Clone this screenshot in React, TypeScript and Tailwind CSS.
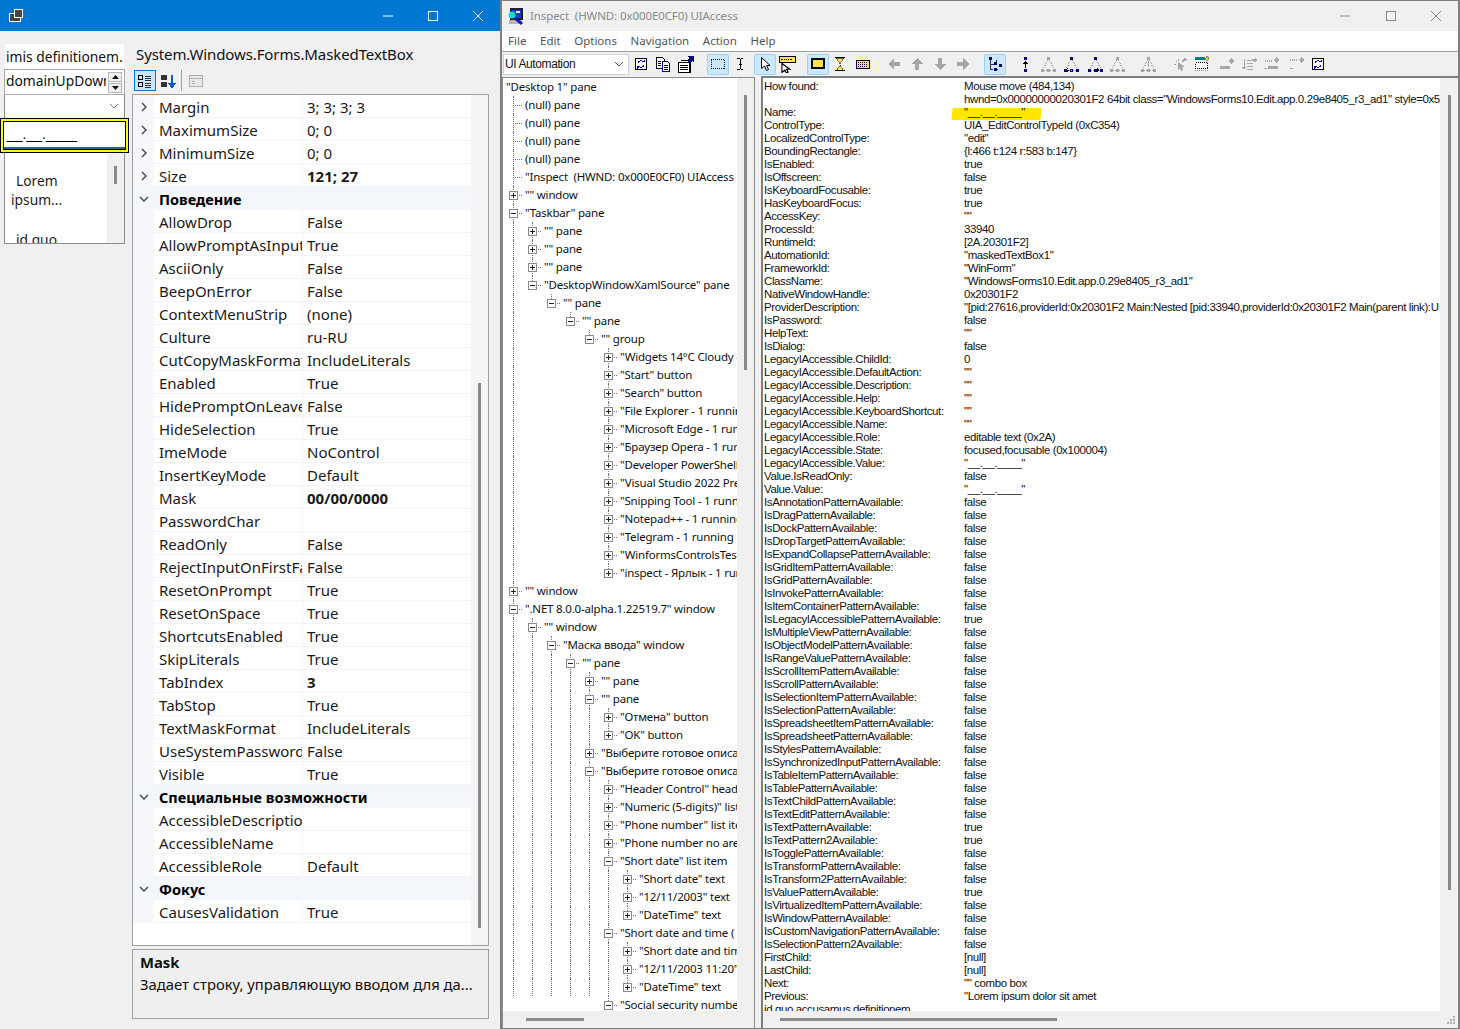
import type { ReactNode } from 'react';

const SEGOE = { fontFamily: '"Noto Sans", sans-serif' };
const ARIAL = { fontFamily: '"Liberation Sans", sans-serif' };

type PropRow = { name: string; value?: string; bold?: boolean; arrow?: boolean; section?: boolean };

const PROPS: PropRow[] = [
  { name: 'Margin', value: '3; 3; 3; 3', arrow: true },
  { name: 'MaximumSize', value: '0; 0', arrow: true },
  { name: 'MinimumSize', value: '0; 0', arrow: true },
  { name: 'Size', value: '121; 27', arrow: true, bold: true },
  { name: 'Поведение', section: true },
  { name: 'AllowDrop', value: 'False' },
  { name: 'AllowPromptAsInput', value: 'True' },
  { name: 'AsciiOnly', value: 'False' },
  { name: 'BeepOnError', value: 'False' },
  { name: 'ContextMenuStrip', value: '(none)' },
  { name: 'Culture', value: 'ru-RU' },
  { name: 'CutCopyMaskFormat', value: 'IncludeLiterals' },
  { name: 'Enabled', value: 'True' },
  { name: 'HidePromptOnLeave', value: 'False' },
  { name: 'HideSelection', value: 'True' },
  { name: 'ImeMode', value: 'NoControl' },
  { name: 'InsertKeyMode', value: 'Default' },
  { name: 'Mask', value: '00/00/0000', bold: true },
  { name: 'PasswordChar', value: '' },
  { name: 'ReadOnly', value: 'False' },
  { name: 'RejectInputOnFirstFailure', value: 'False' },
  { name: 'ResetOnPrompt', value: 'True' },
  { name: 'ResetOnSpace', value: 'True' },
  { name: 'ShortcutsEnabled', value: 'True' },
  { name: 'SkipLiterals', value: 'True' },
  { name: 'TabIndex', value: '3', bold: true },
  { name: 'TabStop', value: 'True' },
  { name: 'TextMaskFormat', value: 'IncludeLiterals' },
  { name: 'UseSystemPasswordChar', value: 'False' },
  { name: 'Visible', value: 'True' },
  { name: 'Специальные возможности', section: true },
  { name: 'AccessibleDescription', value: '' },
  { name: 'AccessibleName', value: '' },
  { name: 'AccessibleRole', value: 'Default' },
  { name: 'Фокус', section: true },
  { name: 'CausesValidation', value: 'True' },
];

// [level, text, box] -- box: + / - / none
type TreeRow = [number, string, '+' | '-' | ''];

const TREE: TreeRow[] = [
  [0, '"Desktop 1" pane', ''],
  [1, '(null) pane', ''],
  [1, '(null) pane', ''],
  [1, '(null) pane', ''],
  [1, '(null) pane', ''],
  [1, '"Inspect  (HWND: 0x000E0CF0) UIAccess', ''],
  [1, '"" window', '+'],
  [1, '"Taskbar" pane', '-'],
  [2, '"" pane', '+'],
  [2, '"" pane', '+'],
  [2, '"" pane', '+'],
  [2, '"DesktopWindowXamlSource" pane', '-'],
  [3, '"" pane', '-'],
  [4, '"" pane', '-'],
  [5, '"" group', '-'],
  [6, '"Widgets 14°C Cloudy - 1', '+'],
  [6, '"Start" button', '+'],
  [6, '"Search" button', '+'],
  [6, '"File Explorer - 1 running', '+'],
  [6, '"Microsoft Edge - 1 running', '+'],
  [6, '"Браузер Opera - 1 running', '+'],
  [6, '"Developer PowerShell', '+'],
  [6, '"Visual Studio 2022 Preview', '+'],
  [6, '"Snipping Tool - 1 running', '+'],
  [6, '"Notepad++ - 1 running', '+'],
  [6, '"Telegram - 1 running', '+'],
  [6, '"WinformsControlsTest', '+'],
  [6, '"inspect - Ярлык - 1 running', '+'],
  [1, '"" window', '+'],
  [1, '".NET 8.0.0-alpha.1.22519.7" window', '-'],
  [2, '"" window', '-'],
  [3, '"Маска ввода" window', '-'],
  [4, '"" pane', '-'],
  [5, '"" pane', '+'],
  [5, '"" pane', '-'],
  [6, '"Отмена" button', '+'],
  [6, '"OK" button', '+'],
  [5, '"Выберите готовое описание', '+'],
  [5, '"Выберите готовое описание', '-'],
  [6, '"Header Control" header', '+'],
  [6, '"Numeric (5-digits)" list item', '+'],
  [6, '"Phone number" list item', '+'],
  [6, '"Phone number no area', '+'],
  [6, '"Short date" list item', '-'],
  [7, '"Short date" text', '+'],
  [7, '"12/11/2003" text', '+'],
  [7, '"DateTime" text', '+'],
  [6, '"Short date and time (', '-'],
  [7, '"Short date and time', '+'],
  [7, '"12/11/2003 11:20" text', '+'],
  [7, '"DateTime" text', '+'],
  [6, '"Social security number', '-'],
];

const DETAILS: [string, string][] = [
  ['How found:', 'Mouse move (484,134)'],
  ['', 'hwnd=0x00000000020301F2 64bit class="WindowsForms10.Edit.app.0.29e8405_r3_ad1" style=0x5'],
  ['Name:', '"__.__.____"'],
  ['ControlType:', 'UIA_EditControlTypeId (0xC354)'],
  ['LocalizedControlType:', '"edit"'],
  ['BoundingRectangle:', '{l:466 t:124 r:583 b:147}'],
  ['IsEnabled:', 'true'],
  ['IsOffscreen:', 'false'],
  ['IsKeyboardFocusable:', 'true'],
  ['HasKeyboardFocus:', 'true'],
  ['AccessKey:', '""'],
  ['ProcessId:', '33940'],
  ['RuntimeId:', '[2A.20301F2]'],
  ['AutomationId:', '"maskedTextBox1"'],
  ['FrameworkId:', '"WinForm"'],
  ['ClassName:', '"WindowsForms10.Edit.app.0.29e8405_r3_ad1"'],
  ['NativeWindowHandle:', '0x20301F2'],
  ['ProviderDescription:', '"[pid:27616,providerId:0x20301F2 Main:Nested [pid:33940,providerId:0x20301F2 Main(parent link):U'],
  ['IsPassword:', 'false'],
  ['HelpText:', '""'],
  ['IsDialog:', 'false'],
  ['LegacyIAccessible.ChildId:', '0'],
  ['LegacyIAccessible.DefaultAction:', '""'],
  ['LegacyIAccessible.Description:', '""'],
  ['LegacyIAccessible.Help:', '""'],
  ['LegacyIAccessible.KeyboardShortcut:', '""'],
  ['LegacyIAccessible.Name:', '""'],
  ['LegacyIAccessible.Role:', 'editable text (0x2A)'],
  ['LegacyIAccessible.State:', 'focused,focusable (0x100004)'],
  ['LegacyIAccessible.Value:', '"__.__.____"'],
  ['Value.IsReadOnly:', 'false'],
  ['Value.Value:', '"__.__.____"'],
  ['IsAnnotationPatternAvailable:', 'false'],
  ['IsDragPatternAvailable:', 'false'],
  ['IsDockPatternAvailable:', 'false'],
  ['IsDropTargetPatternAvailable:', 'false'],
  ['IsExpandCollapsePatternAvailable:', 'false'],
  ['IsGridItemPatternAvailable:', 'false'],
  ['IsGridPatternAvailable:', 'false'],
  ['IsInvokePatternAvailable:', 'false'],
  ['IsItemContainerPatternAvailable:', 'false'],
  ['IsLegacyIAccessiblePatternAvailable:', 'true'],
  ['IsMultipleViewPatternAvailable:', 'false'],
  ['IsObjectModelPatternAvailable:', 'false'],
  ['IsRangeValuePatternAvailable:', 'false'],
  ['IsScrollItemPatternAvailable:', 'false'],
  ['IsScrollPatternAvailable:', 'false'],
  ['IsSelectionItemPatternAvailable:', 'false'],
  ['IsSelectionPatternAvailable:', 'false'],
  ['IsSpreadsheetItemPatternAvailable:', 'false'],
  ['IsSpreadsheetPatternAvailable:', 'false'],
  ['IsStylesPatternAvailable:', 'false'],
  ['IsSynchronizedInputPatternAvailable:', 'false'],
  ['IsTableItemPatternAvailable:', 'false'],
  ['IsTablePatternAvailable:', 'false'],
  ['IsTextChildPatternAvailable:', 'false'],
  ['IsTextEditPatternAvailable:', 'false'],
  ['IsTextPatternAvailable:', 'true'],
  ['IsTextPattern2Available:', 'true'],
  ['IsTogglePatternAvailable:', 'false'],
  ['IsTransformPatternAvailable:', 'false'],
  ['IsTransform2PatternAvailable:', 'false'],
  ['IsValuePatternAvailable:', 'true'],
  ['IsVirtualizedItemPatternAvailable:', 'false'],
  ['IsWindowPatternAvailable:', 'false'],
  ['IsCustomNavigationPatternAvailable:', 'false'],
  ['IsSelectionPattern2Available:', 'false'],
  ['FirstChild:', '[null]'],
  ['LastChild:', '[null]'],
  ['Next:', '"" combo box'],
  ['Previous:', '"Lorem ipsum dolor sit amet'],
  ['id quo accusamus definitionem', ''],
];

function Ico({ children, size = 16 }: { children: ReactNode; size?: number }) {
  return (
    <svg width={size} height={size} viewBox="0 0 16 16" shapeRendering="crispEdges" fill="none">
      {children}
    </svg>
  );
}

const NAVY = '#00007f';
const GR = '#a6a6a6';

function Nodes({ hollow }: { hollow?: boolean }) {
  const c = hollow ? GR : NAVY;
  return (
    <>
      <rect x="7" y="1" width="3" height="3" fill={c} />
      <rect x="1" y="13" width="3" height="3" fill={c} />
      <rect x="7" y="13" width="3" height="3" fill={c} />
      <rect x="13" y="13" width="3" height="3" fill={c} />
    </>
  );
}

function Tri() {
  return <path d="M8 4L3 13M9 4L14 13M4 14.5H13" stroke={GR} strokeWidth="1" strokeDasharray="1 1" />;
}

function RefreshIcon() {
  return (
    <Ico>
      <rect x="2.5" y="2.5" width="11" height="11" stroke="#000" fill="#fff" />
      <path d="M5 7a3 3 0 0 1 5-1.5M11 9a3 3 0 0 1-5 1.5" stroke="#0000c0" />
      <path d="M9 6h3V3zM7 10H4v3z" fill="#0000c0" />
    </Ico>
  );
}

const TOOLBAR: { cls: string; active?: boolean; icon: ReactNode }[] = [
  { cls: 'ml-px', icon: <RefreshIcon /> },
  {
    cls: '',
    icon: (
      <Ico>
        <path d="M1.5 1.5h6l2 2v9h-8z" stroke="#000" fill="#fff" />
        <path d="M7.5 5.5h5l2 2v8h-7z" stroke="#00007f" fill="#fff" />
        <path d="M3 5h3M3 7h3M3 9h3M9 9h4M9 11h4M9 13h4" stroke="#000" />
      </Ico>
    ),
  },
  {
    cls: 'ml-px',
    icon: (
      <Ico size={18}>
        <path d="M1.5 6.5h10v9h-10z" stroke="#000" fill="#fff" />
        <path d="M3.5 4.5h9v2M3 9h7M3 11h7M3 13h7" stroke="#000" />
        <path d="M10 1h5v5l-2-1-2 2-2-2 2-2z" fill={NAVY} />
      </Ico>
    ),
  },
  {
    cls: 'ml-[10px]',
    active: true,
    icon: (
      <Ico>
        <rect x="1.5" y="3.5" width="13" height="9" rx="1" stroke="#000" strokeDasharray="1 1" />
      </Ico>
    ),
  },
  {
    cls: '',
    icon: (
      <Ico>
        <path d="M5 2.5h2.5M8.5 2.5H11M8 3v10M5 13.5h2.5M8.5 13.5H11M6.5 8h3" stroke="#000" />
      </Ico>
    ),
  },
  {
    cls: 'ml-[3px]',
    active: true,
    icon: (
      <Ico>
        <path d="M4.5 1.5v11l3-2.5 2 4.5 2-1-2-4h3.5z" stroke="#000" fill="#fff" strokeWidth="1" shapeRendering="auto" />
      </Ico>
    ),
  },
  {
    cls: '',
    icon: (
      <Ico size={18}>
        <rect x="1.5" y="1.5" width="14" height="5" stroke="#000" fill="#ffe14d" />
        <path d="M3 4h10" stroke="#000" strokeDasharray="1 1" />
        <path d="M3.5 7.5v8l2.5-2 1.5 2.5 1.5-.8-1.5-2.5h3z" stroke="#000" fill="#fff" shapeRendering="auto" />
      </Ico>
    ),
  },
  {
    cls: 'ml-[9px]',
    active: true,
    icon: (
      <Ico>
        <rect x="2" y="3" width="12" height="9" stroke="#000" strokeWidth="2" fill="#ffe14d" />
      </Ico>
    ),
  },
  {
    cls: '',
    icon: (
      <Ico>
        <path d="M3 1.5h10M3 14.5h10" stroke="#000" />
        <path d="M4 2h8L8 7.5zM4 14l4-5.5L12 14z" fill="#ffe14d" stroke="#000" strokeWidth="0.5" />
      </Ico>
    ),
  },
  {
    cls: 'ml-px',
    icon: (
      <Ico>
        <rect x="1.5" y="4.5" width="13" height="8" stroke="#000" fill="#ffe14d" />
        <path d="M3 6.5h10M3 8.5h10M3 10.5h10" stroke="#000" strokeDasharray="1 1" />
      </Ico>
    ),
  },
  { cls: 'ml-[9px]', icon: <Ico><path d="M2 8l6-6v4h6v4H8v4z" fill={GR} /></Ico> },
  { cls: 'ml-px', icon: <Ico><path d="M8 2l6 6h-4v6H6V8H2z" fill={GR} /></Ico> },
  { cls: 'ml-px', icon: <Ico><path d="M8 14l6-6h-4V2H6v6H2z" fill={GR} /></Ico> },
  { cls: 'ml-px', icon: <Ico><path d="M14 8L8 2v4H2v4h6v4z" fill={GR} /></Ico> },
  {
    cls: 'ml-[10px]',
    active: true,
    icon: (
      <Ico>
        <path d="M3 3v10h3M3 8h4M9.5 4v5M10 13h1" stroke="#333" />
        <rect x="2" y="1" width="3" height="3" fill={NAVY} />
        <rect x="7" y="6" width="3" height="3" fill={NAVY} />
        <rect x="12" y="8" width="3" height="3" fill={NAVY} />
        <rect x="7" y="12" width="3" height="3" fill={NAVY} />
      </Ico>
    ),
  },
  {
    cls: 'ml-[8px]',
    icon: (
      <Ico>
        <rect x="7" y="1" width="3" height="3" fill={NAVY} />
        <rect x="7" y="13" width="3" height="3" fill={NAVY} />
        <path d="M8.5 12V6M6.5 8l2-2.5 2 2.5" stroke="#000" />
      </Ico>
    ),
  },
  { cls: 'ml-px', icon: <Ico><Nodes hollow /><Tri /></Ico> },
  {
    cls: 'ml-px',
    icon: (
      <Ico>
        <Nodes />
        <Tri />
        <path d="M6 14h-3M5 12.5L3 14l2 1.5" stroke="#000" />
      </Ico>
    ),
  },
  {
    cls: 'ml-[2px]',
    icon: (
      <Ico>
        <Nodes />
        <Tri />
        <path d="M7 14h4M10 12.5l2 1.5-2 1.5" stroke="#000" />
      </Ico>
    ),
  },
  { cls: '', icon: <Ico><Nodes hollow /><Tri /></Ico> },
  {
    cls: 'ml-[9px]',
    icon: (
      <Ico>
        <Nodes hollow />
        <Tri />
        <path d="M8.5 5v6" stroke={GR} />
      </Ico>
    ),
  },
  {
    cls: 'ml-[10px]',
    icon: (
      <Ico>
        <path d="M4 5l1 1M2 8h2M6 3v2" stroke={GR} />
        <path d="M6 6v8l2-2 1 3 2-1-1-3h3z" fill={GR} shapeRendering="auto" />
        <path d="M9 5l4-3 2 2-4 2z" fill={GR} />
      </Ico>
    ),
  },
  {
    cls: '',
    icon: (
      <Ico>
        <rect x="1" y="1" width="10" height="3" fill="#008080" />
        <path d="M13 0l2 2-2 3-2-2z" fill="#ffd800" stroke="#000" strokeWidth="0.4" />
        <path d="M1.5 6.5h12v6h-12z" stroke="#000" strokeDasharray="1 1" fill="#fff" />
        <path d="M1 14h13" stroke={GR} strokeDasharray="1 1" />
      </Ico>
    ),
  },
  {
    cls: 'ml-[3px]',
    icon: (
      <Ico>
        <rect x="1" y="10" width="10" height="3" fill={GR} />
        <path d="M9 5l3-3 3 3-3 3z" fill={GR} />
      </Ico>
    ),
  },
  {
    cls: '',
    icon: (
      <Ico>
        <path d="M3 3v10M1.5 11L3 13l1.5-2" stroke={GR} />
        <path d="M6 4h6M6 7h6M6 10h6M6 13h6" stroke={GR} />
        <path d="M11 3h3V1l2 3-2 3z" fill={GR} />
      </Ico>
    ),
  },
  {
    cls: '',
    icon: (
      <Ico>
        <path d="M2 5h8" stroke={GR} strokeWidth="2" strokeDasharray="1 1" />
        <path d="M11 3h2V1l3 3-3 3z" fill={GR} />
        <rect x="5" y="10" width="10" height="3" fill={GR} />
        <path d="M1 12h3" stroke={GR} />
      </Ico>
    ),
  },
  {
    cls: 'ml-[4px]',
    icon: (
      <Ico>
        <path d="M1 4h8" stroke={GR} strokeWidth="2" strokeDasharray="1 1" />
        <path d="M10 3h2V1l3 3-3 3z" fill={GR} />
        <path d="M1 12h3" stroke={GR} />
      </Ico>
    ),
  },
  { cls: '-ml-px', icon: <RefreshIcon /> },
];

function Chevron({ open }: { open?: boolean }) {
  return (
    <svg width="10" height="10" viewBox="0 0 10 10" fill="none" stroke="#444" strokeWidth="1.4">
      <path d={open ? 'M1 3l4 4 4-4' : 'M3 1l4 4-4 4'} />
    </svg>
  );
}

function PropertyRow({ row }: { row: PropRow }) {
  if (row.section) {
    return (
      <div className="flex h-[23px] items-center bg-[#f3f6fb]">
        <div className="flex w-[21px] shrink-0 justify-center">
          <Chevron open />
        </div>
        <span className="pl-[5px] pt-[2px] text-[14.5px] font-bold text-black">{row.name}</span>
      </div>
    );
  }
  return (
    <div className="flex h-[23px] items-stretch">
      <div className="flex w-[21px] shrink-0 items-center justify-center bg-[#f5f7fb] pt-px">
        {row.arrow ? <Chevron /> : null}
      </div>
      <div className="flex min-w-0 flex-1 items-stretch border-b border-[#f1f3f8]">
        <div className="w-[149px] shrink-0 overflow-hidden whitespace-nowrap border-r border-[#f1f3f8] pl-[5px] pt-px leading-[22px] text-[#1a1a1a]">
          {row.name}
        </div>
        <div className={'pl-[4px] pt-px leading-[22px] text-[#1a1a1a] ' + (row.bold ? 'font-bold' : '')}>
          {row.value}
        </div>
      </div>
    </div>
  );
}

function SmallArrows() {
  return (
    <div className="ml-[2px] flex w-[14px] flex-col gap-px">
      <div className="flex h-[10px] items-center justify-center border border-[#b5b5b5] bg-[#f0f0f0]">
        <svg width="7" height="4" viewBox="0 0 7 4"><path d="M3.5 0L7 4H0z" fill="#111" /></svg>
      </div>
      <div className="flex h-[10px] items-center justify-center border border-[#b5b5b5] bg-[#f0f0f0]">
        <svg width="7" height="4" viewBox="0 0 7 4"><path d="M3.5 4L7 0H0z" fill="#111" /></svg>
      </div>
    </div>
  );
}

function LeftControls() {
  return (
    <div className="relative flex w-[132px] shrink-0 flex-col pl-[4px] pt-[13px] pr-[7px] text-[13.8px] text-[#111]">
      <div className="ml-px h-[25px] w-[119px] overflow-hidden whitespace-nowrap bg-white pl-px leading-[25px]">
        imis definitionem.
      </div>
      <div className="flex h-[26px] items-center overflow-hidden border border-[#a9a9a9] bg-white">
        <span className="w-[101px] shrink-0 overflow-hidden whitespace-nowrap pb-[2px] pl-px">domainUpDown</span>
        <SmallArrows />
      </div>
      <div className="flex h-[149px] flex-col border border-t-0 border-[#8d8d8d] bg-white">
        <div className="flex h-[22px] items-center justify-end pr-[5px]">
          <svg width="10" height="6" viewBox="0 0 10 6" fill="none" stroke="#777"><path d="M1 1l4 4 4-4" /></svg>
        </div>
        <div className="flex min-h-0 flex-1">
          <div className="h-[126px] flex-1 overflow-hidden whitespace-nowrap bg-white leading-[19px] text-[#222]">
            <div className="pl-[11px] pt-[54px]">Lorem</div>
            <div className="pl-[6px]">ipsum...</div>
            <div className="pl-[11px] pt-[21px]">id quo</div>
          </div>
          <div className="flex w-[17px] shrink-0 justify-center bg-[#f0f0f0] pt-[49px]">
            <div className="h-[18px] w-[3px] bg-[#8a8a8a]" />
          </div>
        </div>
      </div>
      <div className="absolute left-0 top-[87px] h-[35px] w-[129px] border border-black bg-[#ffff00] p-[2px]">
        <div className="h-full w-full border border-black bg-white">
          <div className="h-[27px] border-b-2 border-[#2a6496] pl-[3px] text-[14px] leading-[24px] text-black" style={ARIAL}>
            __.__.____
          </div>
        </div>
      </div>
    </div>
  );
}

function PropertiesPanel() {
  return (
    <div className="flex min-w-0 flex-1 flex-col pr-[11px]">
      <div className="h-[38px] pl-[4px] pt-[11px] text-[15px] leading-[24px] tracking-[-0.1px] text-[#111]">
        System.Windows.Forms.MaskedTextBox
      </div>
      <div className="flex h-[23px] items-center pl-[2px]">
        <div className="flex h-[21px] w-[22px] items-center justify-center border border-[#0078d4] bg-[#cce4f7]">
          <Ico>
            <rect x="1.5" y="2.5" width="4" height="4" stroke="#000" />
            <rect x="1.5" y="9.5" width="4" height="4" stroke="#000" />
            <path d="M8 3h6M8 5h6M8 7h6M8 10h6M8 12h6M8 14h6" stroke="#333" />
          </Ico>
        </div>
        <div className="ml-[4px] flex w-[16px] items-center justify-center">
          <Ico>
            <rect x="1" y="2" width="6" height="5" fill="#333" />
            <rect x="1" y="9" width="6" height="5" fill="#333" />
            <path d="M12 2v11M9 10l3 4 3-4" stroke="#0a5bc4" strokeWidth="2" />
          </Ico>
        </div>
        <div className="ml-[5px] h-[21px] w-px bg-[#a0a0a0]" />
        <div className="ml-[6px] flex items-center">
          <Ico>
            <rect x="1.5" y="2.5" width="13" height="11" stroke="#b0b0b0" fill="#e8e8e8" />
            <path d="M1 5.5h14M4 8h3M4 10h3" stroke="#b0b0b0" />
          </Ico>
        </div>
      </div>
      <div className="mt-[2px] flex h-[852px] flex-col overflow-hidden border border-[#a0a0a0] bg-white">
        <div className="flex min-h-0 flex-1 text-[15px]">
          <div className="flex-1 overflow-hidden">
            {PROPS.map((row) => (
              <PropertyRow key={row.name} row={row} />
            ))}
          </div>
          <div className="flex w-[17px] shrink-0 justify-center bg-[#f5f5f5] pt-[288px]">
            <div className="h-[545px] w-[3px] bg-[#8a8a8a]" />
          </div>
        </div>
      </div>
      <div className="mt-[3px] h-[70px] border border-[#a0a0a0] bg-[#efefef] pl-[7px] pt-[2px] text-[14.8px] text-[#111]">
        <div className="font-bold leading-[21px]">Mask</div>
        <div className="leading-[22px]">Задает строку, управляющую вводом для да...</div>
      </div>
    </div>
  );
}

function LeftWindow() {
  return (
    <div className="flex h-full w-[500px] shrink-0 flex-col bg-[#f0f0f0]" style={SEGOE}>
      <div className="flex h-[31px] shrink-0 items-center bg-[#0078d4]">
        <svg className="ml-[9px]" width="15" height="14" viewBox="0 0 15 14" shapeRendering="crispEdges">
          <rect x="0.5" y="4.5" width="11" height="8" fill="#444" stroke="#fff" />
          <rect x="5.5" y="0.5" width="8" height="8" fill="#444" stroke="#fff" />
        </svg>
        <div className="ml-auto flex text-white">
          <div className="flex w-[45px] justify-center">
            <svg width="12" height="12" viewBox="0 0 12 12"><path d="M1 6h10" stroke="#fff" /></svg>
          </div>
          <div className="flex w-[45px] justify-center">
            <svg width="12" height="12" viewBox="0 0 12 12" fill="none"><rect x="1.5" y="1.5" width="9" height="9" stroke="#fff" /></svg>
          </div>
          <div className="flex w-[45px] justify-center">
            <svg width="12" height="12" viewBox="0 0 12 12" fill="none"><path d="M1 1l10 10M11 1L1 11" stroke="#fff" /></svg>
          </div>
        </div>
      </div>
      <div className="flex min-h-0 flex-1">
        <LeftControls />
        <PropertiesPanel />
      </div>
    </div>
  );
}

function hasGuide(index: number, level: number) {
  // does a sibling at `level` show up later, before the tree leaves that branch?
  for (let i = index + 1; i < TREE.length; i++) {
    if (TREE[i][0] < level) return false;
    if (TREE[i][0] === level) return true;
  }
  return index < TREE.length - 1 && level <= TREE[index][0];
}

function TreeBox({ kind }: { kind: '+' | '-' }) {
  return (
    <svg width="9" height="9" viewBox="0 0 9 9" shapeRendering="crispEdges" className="bg-white">
      <rect x="0.5" y="0.5" width="8" height="8" fill="#fff" stroke="#8a8a8a" />
      <path d={kind === '+' ? 'M2 4.5h5M4.5 2v5' : 'M2 4.5h5'} stroke="#222" />
    </svg>
  );
}

function TreeLine({ row, index }: { row: TreeRow; index: number }) {
  const [level, text, box] = row;
  if (level === 0) {
    return <div className="h-[18px] whitespace-nowrap pl-[3px] leading-[18px]">{text}</div>;
  }
  const guides = [];
  for (let k = 1; k < level; k++) {
    guides.push(
      <div key={k} className="h-full w-[19px] shrink-0 pl-[10px]">
        {hasGuide(index, k) ? <div className="h-full border-l border-dotted border-[#777]" /> : null}
      </div>,
    );
  }
  const continues = hasGuide(index, level);
  return (
    <div className="flex h-[18px]">
      {guides}
      <div className="relative h-full w-[19px] shrink-0 pl-[10px]">
        <div className={'border-l border-dotted border-[#777] ' + (continues ? 'h-full' : 'h-1/2')} />
        <div className="absolute left-[10px] top-[9px] w-[9px] border-t border-dotted border-[#777]" />
        {box ? (
          <div className="absolute left-[6px] top-[5px] flex h-[9px] w-[9px]">
            <TreeBox kind={box} />
          </div>
        ) : null}
      </div>
      <div className="whitespace-pre pl-[3px] leading-[18px]">{text}</div>
    </div>
  );
}

function TreePane() {
  return (
    <div className="mt-px flex w-[253px] shrink-0 flex-col border-l border-r border-t border-[#8c8c8c]">
      <div className="flex min-h-0 flex-1">
        <div className="w-[234px] shrink-0 overflow-hidden bg-white text-[11.5px] tracking-[-0.2px] text-[#111]">
          {TREE.map((row, i) => (
            <TreeLine key={i} row={row} index={i} />
          ))}
        </div>
        <div className="flex flex-1 justify-center bg-[#f0f0f0] pt-[17px]">
          <div className="h-[275px] w-[3px] bg-[#8a8a8a]" />
        </div>
      </div>
      <div className="h-[17px] shrink-0 bg-[#f0f0f0] pl-[23px] pt-[7px]">
        <div className="h-[3px] w-[58px] bg-[#8a8a8a]" />
      </div>
    </div>
  );
}

function DetailLine({ label, value }: { label: string; value: string }) {
  const isName = label === 'Name:';
  return (
    <div className="relative flex h-[13px] whitespace-nowrap leading-[13px]">
      {isName ? (
        <div className="absolute left-[188px] top-[2px] h-[12px] w-[89px] -skew-x-6 bg-[#ffe600]" />
      ) : null}
      <div className="w-[200px] shrink-0">{label}</div>
      <div className="relative">{value}</div>
    </div>
  );
}

function DetailsPane() {
  return (
    <div className="flex min-w-0 flex-1 flex-col border-l-2 border-t-2 border-[#7f7f7f]">
      <div className="flex min-h-0 flex-1">
        <div className="w-[677px] shrink-0 overflow-hidden bg-white pl-px pt-[2px] text-[11.5px] tracking-[-0.4px] text-[#111]" style={ARIAL}>
          {DETAILS.map(([label, value], i) => (
            <DetailLine key={i} label={label} value={value} />
          ))}
        </div>
        <div className="flex flex-1 justify-center bg-[#f0f0f0] pt-[17px]">
          <div className="h-[795px] w-[3px] bg-[#8a8a8a]" />
        </div>
      </div>
      <div className="flex h-[17px] shrink-0 items-start justify-between bg-[#f0f0f0] pl-[17px] pr-[2px]">
        <div className="mt-[7px] h-[3px] w-[277px] bg-[#8a8a8a]" />
        <svg className="mt-[4px]" width="10" height="10" viewBox="0 0 10 10" shapeRendering="crispEdges">
          <path d="M7 1h2v2H7zM4 4h2v2H4zM7 4h2v2H7zM1 7h2v2H1zM4 7h2v2H4zM7 7h2v2H7z" fill="#b0b0b0" />
        </svg>
      </div>
    </div>
  );
}

function RightWindow() {
  return (
    <div className="flex h-full min-w-0 flex-1 flex-col border-x-2 border-y border-[#7f7f7f] bg-[#f0f0f0]" style={SEGOE}>
      <div className="flex h-[30px] shrink-0 items-center text-[11.5px] tracking-[-0.1px] text-[#8a8a8a]">
        <svg className="ml-[6px]" width="17" height="17" viewBox="0 0 17 17" shapeRendering="crispEdges">
          <rect x="2" y="0" width="13" height="12" fill="#222" />
          <rect x="4" y="2" width="9" height="8" fill="#1d38d8" />
          <rect x="8" y="3" width="4" height="2" fill="#e8e8e8" />
          <rect x="1" y="12" width="13" height="4" fill="#b5b5b5" />
          <circle cx="4" cy="7" r="3.5" fill="#19d6e0" shapeRendering="auto" />
          <path d="M8 9l7 6-2 2-6-5z" fill="#1010c0" shapeRendering="auto" />
        </svg>
        <span className="ml-[5px] whitespace-pre">Inspect  (HWND: 0x000E0CF0) UIAccess</span>
        <div className="ml-auto flex">
          <div className="flex w-[46px] justify-center">
            <svg width="12" height="12" viewBox="0 0 12 12"><path d="M1 6h10" stroke="#888" /></svg>
          </div>
          <div className="flex w-[46px] justify-center">
            <svg width="12" height="12" viewBox="0 0 12 12" fill="none"><rect x="1.5" y="1.5" width="9" height="9" stroke="#888" /></svg>
          </div>
          <div className="flex w-[44px] justify-center">
            <svg width="12" height="12" viewBox="0 0 12 12" fill="none"><path d="M1 1l10 10M11 1L1 11" stroke="#888" /></svg>
          </div>
        </div>
      </div>
      <div className="flex h-[20px] shrink-0 items-center gap-[13.6px] bg-white pl-[6px] text-[11.5px] text-[#555]">
        <span>File</span>
        <span>Edit</span>
        <span>Options</span>
        <span>Navigation</span>
        <span>Action</span>
        <span>Help</span>
      </div>
      <div className="flex h-[25px] shrink-0 items-center border-t border-[#a0a0a0] pl-px">
        <div className="flex h-[21px] w-[126px] shrink-0 items-center justify-between border border-[#d0d0d0] bg-white pl-px pr-[4px] text-[12px] text-[#111]">
          <span className="tracking-[-0.4px]" style={ARIAL}>UI Automation</span>
          <svg width="10" height="6" viewBox="0 0 10 6" fill="none" stroke="#555"><path d="M1 1l4 4 4-4" /></svg>
        </div>
        {TOOLBAR.map((item, i) => (
          <div
            key={i}
            className={
              'flex h-[21px] w-[22px] shrink-0 items-center justify-center rounded-[2px] ' +
              item.cls +
              (item.active ? ' border border-[#99d1ff] bg-[#cce8ff]' : '')
            }
          >
            {item.icon}
          </div>
        ))}
      </div>
      <div className="flex min-h-0 flex-1 gap-[6px]">
        <TreePane />
        <DetailsPane />
      </div>
    </div>
  );
}

export default function App() {
  return (
    <div className="flex h-[1029px] w-[1460px] overflow-hidden">
      <LeftWindow />
      <RightWindow />
    </div>
  );
}
